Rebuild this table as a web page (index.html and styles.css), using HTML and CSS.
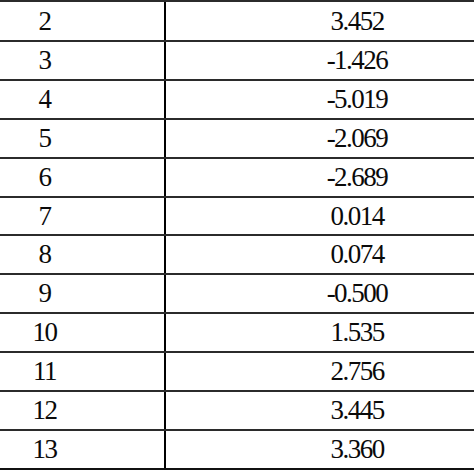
FILE: index.html
```html
<!DOCTYPE html>
<html>
<head>
<meta charset="utf-8">
<link rel="stylesheet" href="styles.css">
</head>
<body>
<div class="table">
  <div class="row first"><div class="c1">2</div><div class="c2">3.452</div></div>
  <div class="row"><div class="c1">3</div><div class="c2">-1.426</div></div>
  <div class="row"><div class="c1">4</div><div class="c2">-5.019</div></div>
  <div class="row"><div class="c1">5</div><div class="c2">-2.069</div></div>
  <div class="row"><div class="c1">6</div><div class="c2">-2.689</div></div>
  <div class="row"><div class="c1">7</div><div class="c2">0.014</div></div>
  <div class="row"><div class="c1">8</div><div class="c2">0.074</div></div>
  <div class="row"><div class="c1">9</div><div class="c2">-0.500</div></div>
  <div class="row"><div class="c1">10</div><div class="c2">1.535</div></div>
  <div class="row"><div class="c1">11</div><div class="c2">2.756</div></div>
  <div class="row"><div class="c1">12</div><div class="c2">3.445</div></div>
  <div class="row last"><div class="c1">13</div><div class="c2">3.360</div></div>
</div>
</body>
</html>
```

FILE: styles.css
```css
html, body {
  margin: 0;
  padding: 0;
  background: #fff;
  overflow: hidden;
}
body {
  width: 474px;
  height: 474px;
}
.table {
  width: 474px;
  border-top: 2px solid #2b2b2b;
  font-family: "Liberation Serif", "Times New Roman", serif;
  font-size: 27px;
  letter-spacing: -1.5px;
  color: #0a0a0a;
}
.row {
  display: flex;
  height: 38.9px;
  box-sizing: border-box;
  border-bottom: 2px solid #2b2b2b;
}
.row.first {
  height: 40px;
}
.row.last {
  border-bottom-width: 2.5px;
  border-bottom-color: #111;
}
.c1, .c2 {
  display: flex;
  align-items: center;
  justify-content: center;
  box-sizing: border-box;
}
.c1 {
  width: 165.5px;
  padding-right: 74.5px;
  border-right: 2px solid #000;
}
.c2 {
  flex: 1;
  padding-left: 74.5px;
}
```
